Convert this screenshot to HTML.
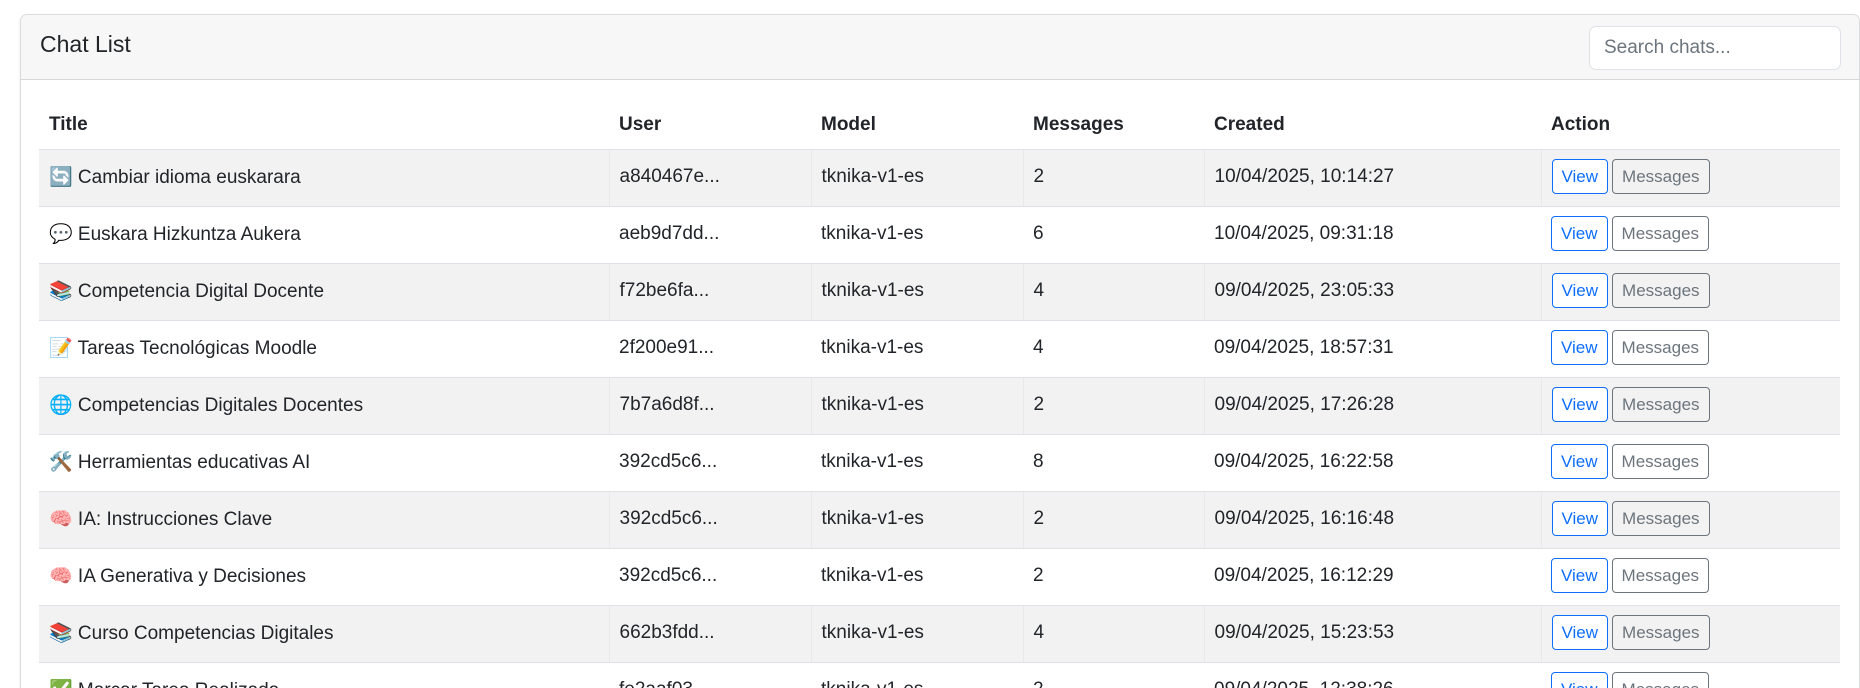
<!DOCTYPE html>
<html><head><meta charset="utf-8"><style>
*{box-sizing:border-box}
html,body{margin:0;width:1860px;height:688px;overflow:hidden}
body{background:#fff;font-family:"Liberation Sans","DejaVu Sans",sans-serif;color:#212529;position:relative}
.card{position:absolute;left:20px;top:14px;width:1840px;height:674px;border:1px solid #d9dcdf;border-bottom:none;border-radius:7px 7px 0 0;overflow:hidden;box-shadow:0 1px 3px rgba(0,0,0,.08)}
.hd{height:65px;background:#f7f7f7;border-bottom:1px solid #d6d8da;position:relative}
.hd h1{margin:0;position:absolute;left:19px;top:16px;font-size:23px;font-weight:normal;color:#212529}
.search{position:absolute;left:1568px;top:11px;width:252px;height:44px;border:1px solid #dee2e6;border-radius:7px;background:#fff;font-size:19px;color:#6c757d;padding:10px 14px}
table{position:absolute;left:18px;top:86px;border-collapse:collapse;width:1801px;font-size:19px}
th{text-align:left;height:48px;padding:0 10px;font-weight:bold;border-bottom:1px solid #dee2e6}
td{height:57px;padding:0 10px 2px;border-bottom:1px solid #dee2e6;white-space:nowrap}
tbody tr:nth-child(odd) td{background:#f2f2f2}
tbody tr:nth-child(odd) td+td{border-left:1px solid #e9e9e9}
.b{display:inline-block;height:35px;line-height:33px;border:1px solid;border-radius:4px;font-size:17px;padding:0 9px;vertical-align:middle}
.v{color:#0d6efd;border-color:#0d6efd;background:#fff}
.m{color:#6c757d;border-color:#6c757d;margin-left:4px;background:transparent}
</style></head><body>
<div class="card">
<div class="hd"><h1>Chat List</h1><div class="search">Search chats...</div></div>
<table>
<colgroup><col style="width:570px"><col style="width:202px"><col style="width:212px"><col style="width:181px"><col style="width:337px"><col></colgroup>
<thead><tr><th>Title</th><th>User</th><th>Model</th><th>Messages</th><th>Created</th><th>Action</th></tr></thead>
<tbody>
<tr><td>🔄 Cambiar idioma euskarara</td><td>a840467e...</td><td>tknika-v1-es</td><td>2</td><td>10/04/2025, 10:14:27</td><td><span class="b v">View</span><span class="b m">Messages</span></td></tr>
<tr><td>💬 Euskara Hizkuntza Aukera</td><td>aeb9d7dd...</td><td>tknika-v1-es</td><td>6</td><td>10/04/2025, 09:31:18</td><td><span class="b v">View</span><span class="b m">Messages</span></td></tr>
<tr><td>📚 Competencia Digital Docente</td><td>f72be6fa...</td><td>tknika-v1-es</td><td>4</td><td>09/04/2025, 23:05:33</td><td><span class="b v">View</span><span class="b m">Messages</span></td></tr>
<tr><td>📝 Tareas Tecnológicas Moodle</td><td>2f200e91...</td><td>tknika-v1-es</td><td>4</td><td>09/04/2025, 18:57:31</td><td><span class="b v">View</span><span class="b m">Messages</span></td></tr>
<tr><td>🌐 Competencias Digitales Docentes</td><td>7b7a6d8f...</td><td>tknika-v1-es</td><td>2</td><td>09/04/2025, 17:26:28</td><td><span class="b v">View</span><span class="b m">Messages</span></td></tr>
<tr><td>🛠️ Herramientas educativas AI</td><td>392cd5c6...</td><td>tknika-v1-es</td><td>8</td><td>09/04/2025, 16:22:58</td><td><span class="b v">View</span><span class="b m">Messages</span></td></tr>
<tr><td>🧠 IA: Instrucciones Clave</td><td>392cd5c6...</td><td>tknika-v1-es</td><td>2</td><td>09/04/2025, 16:16:48</td><td><span class="b v">View</span><span class="b m">Messages</span></td></tr>
<tr><td>🧠 IA Generativa y Decisiones</td><td>392cd5c6...</td><td>tknika-v1-es</td><td>2</td><td>09/04/2025, 16:12:29</td><td><span class="b v">View</span><span class="b m">Messages</span></td></tr>
<tr><td>📚 Curso Competencias Digitales</td><td>662b3fdd...</td><td>tknika-v1-es</td><td>4</td><td>09/04/2025, 15:23:53</td><td><span class="b v">View</span><span class="b m">Messages</span></td></tr>
<tr><td>✅ Marcar Tarea Realizada</td><td>fe2aaf03...</td><td>tknika-v1-es</td><td>2</td><td>09/04/2025, 12:38:26</td><td><span class="b v">View</span><span class="b m">Messages</span></td></tr>
</tbody>
</table>
</div>
</body></html>
